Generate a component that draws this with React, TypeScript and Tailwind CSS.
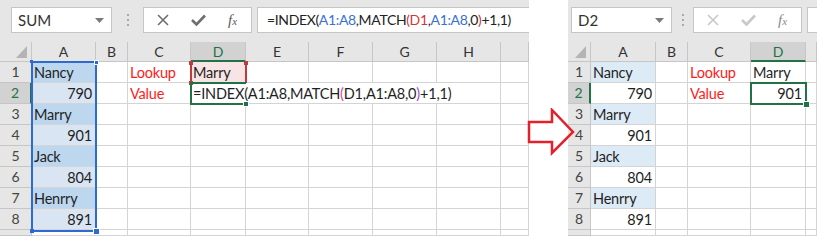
import React from 'react';

const ink = 'text-[#1f1f1f]';

function Caret() {
  return (
    <svg width="9" height="5" viewBox="0 0 9 5" className="absolute right-[7px] top-[10px]">
      <path d="M0 0 L9 0 L4.5 5 Z" fill="#7a7a7a" />
    </svg>
  );
}

function Dots() {
  return (
    <div className="w-[31px] h-[26px] flex flex-col items-center justify-center gap-[3px]">
      <span className="w-[2px] h-[2px] bg-[#a8a8a8]" />
      <span className="w-[2px] h-[2px] bg-[#a8a8a8]" />
      <span className="w-[2px] h-[2px] bg-[#a8a8a8]" />
    </div>
  );
}

function FxBox({ active }: { active: boolean }) {
  const c = active ? '#6f6f6f' : '#c8c8c8';
  return (
    <div className="w-[109px] h-[26px] shrink-0 bg-white border border-[#c6c6c6] flex items-center">
      <svg width="12" height="12" viewBox="0 0 12 12" className="ml-[13px]">
        <path d="M1 1 L11 11 M11 1 L1 11" stroke={c} strokeWidth="1.6" />
      </svg>
      <svg width="15" height="12" viewBox="0 0 15 12" className="ml-[22px]">
        <path d="M1 6 L5.5 10.5 L14 1.5" stroke={c} strokeWidth="2.6" fill="none" />
      </svg>
      <span
        className="ml-[22px] italic text-[15px] leading-none [font-family:'Liberation_Serif',serif]"
        style={{ color: active ? '#5a5a5a' : '#8a8a8a' }}
      >
        f<span className="text-[11px]">x</span>
      </span>
    </div>
  );
}

function Toolbar({ name, active, children, pl }: { name: string; active: boolean; children?: React.ReactNode; pl: string }) {
  return (
    <div className={`h-[42px] bg-[#e6e6e6] flex items-start pt-[7px] ${pl}`}>
      <div className="relative w-[101px] h-[26px] shrink-0 bg-white border border-[#c6c6c6] pl-[6px] text-[15px] leading-[24px] text-[#333]">
        {name}
        <Caret />
      </div>
      <Dots />
      <FxBox active={active} />
      <div className="ml-[5px] h-[26px] flex-1 min-w-0 bg-white border border-[#c6c6c6] border-r-0 pl-[9px] text-[14px] tracking-[-0.35px] leading-[24px] whitespace-nowrap overflow-hidden text-[#222]">
        {children}
      </div>
    </div>
  );
}

function Corner() {
  return (
    <div className="relative bg-[#e6e6e6] border-r border-b border-[#c6c6c6]">
      <svg width="11" height="12" viewBox="0 0 11 12" className="absolute right-[4px] bottom-[3px]">
        <path d="M11 0 L11 12 L0 12 Z" fill="#b4b4b4" />
      </svg>
    </div>
  );
}

function ColHead({ label, sel }: { label: string; sel?: boolean }) {
  return (
    <div
      className={`text-center text-[14px] leading-[19px] border-r border-[#c6c6c6] ${
        sel ? 'bg-[#d2d2d2] text-[#217346] border-b-2 border-b-[#217346]' : 'bg-[#e6e6e6] text-[#333] border-b border-b-[#c6c6c6]'
      }`}
    >
      {label}
    </div>
  );
}

function RowHead({ n, sel }: { n: number | string; sel?: boolean }) {
  return (
    <div
      className={`text-center text-[14px] leading-[20px] border-b border-[#c6c6c6] ${
        sel ? 'bg-[#d2d2d2] text-[#217346] border-r-2 border-r-[#217346]' : 'bg-[#e6e6e6] text-[#444] border-r border-r-[#c6c6c6]'
      }`}
    >
      {n}
    </div>
  );
}

function Cell({ children, className = '', right }: { children?: React.ReactNode; className?: string; right?: boolean }) {
  return (
    <div
      className={`border-r border-b border-[#d4d4d4] whitespace-nowrap text-[14.5px] tracking-[-0.2px] leading-[20px] pt-[1px] ${
        right ? 'text-right pr-[3px]' : 'pl-[2px]'
      } ${ink} ${className}`}
    >
      {children}
    </div>
  );
}

const names: [string, string][] = [
  ['Nancy', '790'],
  ['Marry', '901'],
  ['Jack', '804'],
  ['Henrry', '891'],
];

function LeftSheet() {
  const rows: React.ReactNode[] = [];
  for (let i = 1; i <= 8; i++) {
    const odd = i % 2 === 1;
    const pair = names[Math.floor((i - 1) / 2)];
    rows.push(
      <React.Fragment key={i}>
        <RowHead n={i} sel={i === 2} />
        <Cell right={!odd} className={odd ? 'bg-[#bdd7ee]' : 'bg-[#dae5f4]'}>
          {odd ? pair[0] : pair[1]}
        </Cell>
        <Cell />
        {i === 1 && <Cell className="text-[#ff1a1a]">Lookup</Cell>}
        {i === 2 && <Cell className="text-[#ff1a1a]">Value</Cell>}
        {i > 2 && <Cell />}
        {i === 1 && <Cell className="bg-[#f8e4e4]">Marry</Cell>}
        {i === 2 ? (
          <Cell className="col-span-5">
            =INDEX(A1:A8,MATCH<span className="text-[#e0409a]">(</span>D1,A1:A8,0
            <span className="text-[#a044c8]">)</span>+1,1)
          </Cell>
        ) : (
          <>
            {i !== 1 && <Cell />}
            <Cell />
            <Cell />
            <Cell />
            <Cell />
          </>
        )}
        {i === 2 && <Cell />}
        {i !== 2 && <Cell />}
      </React.Fragment>
    );
  }
  return (
    <div className="relative w-[529px] overflow-hidden">
      <div className="grid grid-cols-[32px_64px_32px_63px_55px_63px_64px_64px_64px_28px] grid-rows-[20px_repeat(8,21px)_6px]">
        <Corner />
        {['A', 'B', 'C', 'D', 'E', 'F', 'G', 'H', 'I'].map((l) => (
          <ColHead key={l} label={l === 'I' ? '' : l} sel={l === 'D'} />
        ))}
        {rows}
        <RowHead n="" />
        {Array.from({ length: 9 }).map((_, k) => (
          <Cell key={k} />
        ))}
      </div>

      {/* A1:A8 reference range */}
      <div className="absolute left-[31px] top-[19px] w-[66px] h-[171px] border-2 border-[#2e6bd0]" />
      <span className="absolute left-[30px] top-[18px] w-[3px] h-[3px] bg-[#2e6bd0]" />
      <span className="absolute left-[94px] top-[18px] w-[5px] h-[5px] bg-[#2e6bd0] border border-white" />
      <span className="absolute left-[30px] top-[187px] w-[4px] h-[4px] bg-[#2e6bd0]" />
      <span className="absolute left-[93px] top-[186px] w-[7px] h-[7px] bg-[#2e6bd0] border border-white" />

      {/* D1 reference */}
      <div className="absolute left-[190px] top-[20px] w-[57px] h-[21px] border-x-2 border-[#c0393d]" />
      <span className="absolute left-[189px] top-[19px] w-[4px] h-[4px] bg-[#c0393d]" />
      <span className="absolute left-[244px] top-[19px] w-[4px] h-[4px] bg-[#c0393d]" />
      <span className="absolute left-[189px] top-[39px] w-[4px] h-[4px] bg-[#c0393d]" />

      {/* D2 editing */}
      <div className="absolute left-[190px] top-[40px] w-[56px] h-[23px] border-l-2 border-y-2 border-[#217346]" />
      <span className="absolute left-[243px] top-[59px] w-[6px] h-[6px] bg-[#217346] border border-white" />
    </div>
  );
}

function RightSheet() {
  const rows: React.ReactNode[] = [];
  for (let i = 1; i <= 8; i++) {
    const odd = i % 2 === 1;
    const pair = names[Math.floor((i - 1) / 2)];
    rows.push(
      <React.Fragment key={i}>
        <RowHead n={i} sel={i === 2} />
        <Cell right={!odd} className={odd ? 'bg-[#ddebf7]' : 'bg-white'}>
          {odd ? pair[0] : pair[1]}
        </Cell>
        <Cell />
        <Cell className="text-[#ff1a1a]">{i === 1 ? 'Lookup' : i === 2 ? 'Value' : ''}</Cell>
        <Cell right={i === 2}>{i === 1 ? 'Marry' : i === 2 ? '901' : ''}</Cell>
        <Cell />
      </React.Fragment>
    );
  }
  return (
    <div className="relative w-[249px] overflow-hidden">
      <div className="grid grid-cols-[23px_65px_32px_63px_55px_11px] grid-rows-[20px_repeat(8,21px)_6px]">
        <Corner />
        {['A', 'B', 'C', 'D', ''].map((l, k) => (
          <ColHead key={k} label={l} sel={l === 'D'} />
        ))}
        {rows}
        <RowHead n="" />
        {Array.from({ length: 5 }).map((_, k) => (
          <Cell key={k} />
        ))}
      </div>
      <div className="absolute left-[182px] top-[40px] w-[57px] h-[23px] border-2 border-[#217346]" />
      <span className="absolute left-[235px] top-[59px] w-[7px] h-[7px] bg-[#217346] border border-white" />
    </div>
  );
}

export default function App() {
  return (
    <div className="relative w-[817px] h-[236px] bg-white overflow-hidden flex [font-family:Lato,'Noto_Sans',sans-serif]">
      <div className="w-[529px] shrink-0">
        <Toolbar name="SUM" active pl="pl-[11px]">
          =INDEX(<span className="text-[#3a70cf]">A1:A8</span>,MATCH
          <span className="text-[#d0363a]">(D1</span>,<span className="text-[#3a70cf]">A1:A8</span>,0
          <span className="text-[#d0363a]">)</span>+1,1)
        </Toolbar>
        <LeftSheet />
      </div>
      <div className="w-[39px] shrink-0" />
      <div className="w-[249px] shrink-0">
        <Toolbar name="D2" active={false} pl="pl-[3px]" />
        <RightSheet />
      </div>

      {/* arrow */}
      <svg width="50" height="48" viewBox="0 0 50 48" className="absolute left-[527px] top-[108px]">
        <path d="M2 14 L25 14 L25 2 L46 24 L25 45 L25 34 L2 34 Z" fill="none" stroke="#e4202a" strokeWidth="2.5" strokeLinejoin="miter" />
      </svg>
    </div>
  );
}
